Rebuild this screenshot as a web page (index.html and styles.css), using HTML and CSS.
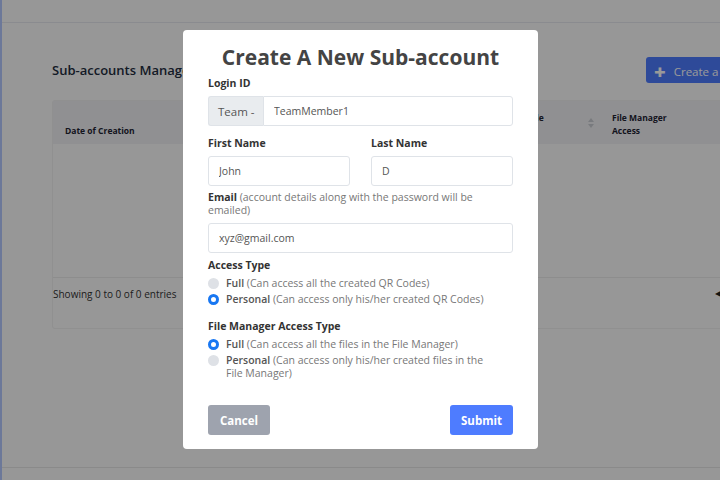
FILE: index.html
```html
<!DOCTYPE html>
<html lang="en">
<head>
  <meta charset="UTF-8">
  <title>Sub-accounts Management</title>
  <link rel="stylesheet" href="styles.css">
</head>
<body>
  <div class="page">
    <div class="sidebar-edge"></div>
    <div class="main">
      <div class="topbar"></div>
      <div class="content">
        <div class="title-row">
          <h2>Sub-accounts Management</h2>
          <button class="create-btn"><span class="plus">+</span> Create a Sub-account</button>
        </div>
        <div class="card">
          <div class="thead">
            <div class="th">Date of Creation</div>
            <div class="th">Login ID</div>
            <div class="th">Name</div>
            <div class="th">QR Code<br>Access <span class="sort"></span></div>
            <div class="th">File Manager<br>Access</div>
          </div>
          <div class="tbody-empty"></div>
          <div class="tfoot">
            <span>Showing 0 to 0 of 0 entries</span>
            <span class="pager">&#9664;</span>
          </div>
        </div>
      </div>
      <div class="footer"></div>
    </div>
  </div>

  <div class="overlay">
    <div class="modal">
      <h1>Create A New Sub-account</h1>

      <label class="field-label">Login ID</label>
      <div class="input-group">
        <span class="prefix">Team -</span>
        <input type="text" value="TeamMember1">
      </div>

      <div class="row">
        <div class="col">
          <label class="field-label">First Name</label>
          <input type="text" value="John">
        </div>
        <div class="col">
          <label class="field-label">Last Name</label>
          <input type="text" value="D">
        </div>
      </div>

      <label class="field-label">Email <span class="hint">(account details along with the password will be emailed)</span></label>
      <input class="email" type="text" value="xyz@gmail.com">

      <div class="radio-block">
        <label class="field-label">Access Type</label>
        <div class="radio"><span class="dot"></span><span><b>Full</b> (Can access all the created QR Codes)</span></div>
        <div class="radio"><span class="dot on"></span><span><b>Personal</b> (Can access only his/her created QR Codes)</span></div>
      </div>

      <div class="radio-block">
        <label class="field-label">File Manager Access Type</label>
        <div class="radio"><span class="dot on"></span><span><b>Full</b> (Can access all the files in the File Manager)</span></div>
        <div class="radio"><span class="dot"></span><span><b>Personal</b> (Can access only his/her created files in the File Manager)</span></div>
      </div>

      <div class="actions">
        <button class="btn cancel">Cancel</button>
        <button class="btn submit">Submit</button>
      </div>
    </div>
  </div>
</body>
</html>
```

FILE: styles.css
```css
body {
  margin: 0;
  font-family: "Open Sans", "Liberation Sans", sans-serif;
  background-color: #fcfcfc;
  width: 720px;
  height: 480px;
  overflow: hidden;
}
.page {
  display: flex;
  height: 480px;
}
.sidebar-edge {
  width: 2px;
  background-color: #b4c8ff;
}
.main {
  flex: 1;
  display: flex;
  flex-direction: column;
  min-width: 0;
  overflow: hidden;
}
.topbar {
  height: 22px;
  flex: none;
  border-bottom: 1px solid #e6e8ee;
}
.content {
  flex: 1;
  padding: 34px 0 0 50px;
}
.title-row {
  display: flex;
  justify-content: space-between;
  align-items: center;
  height: 26px;
}
.title-row h2 {
  margin: 0;
  font-size: 13px;
  font-weight: 600;
  color: #1f2d40;
}
.create-btn {
  flex: none;
  width: 130px;
  height: 26px;
  margin-right: -56px;
  border: none;
  border-radius: 3px;
  background-color: #4e7cff;
  color: #fff;
  font-family: inherit;
  font-size: 11.5px;
  text-align: left;
  padding-left: 8px;
  white-space: nowrap;
}
.plus {
  font-size: 20px;
  font-weight: 800;
  margin-right: 5px;
  vertical-align: -3px;
}
.card {
  margin-top: 17px;
  margin-right: -10px;
  border: 1px solid #f0f0f0;
  border-radius: 3px;
  background-color: #fcfcfc;
}
.thead {
  display: grid;
  grid-template-columns: 150px 150px 143px 104px 140px;
  height: 43px;
  background-color: #f0f1f3;
}
.th {
  position: relative;
  display: flex;
  align-items: flex-end;
  padding: 0 0 7px 12px;
  font-size: 8.5px;
  font-weight: 700;
  color: #1f2333;
  line-height: 13px;
}
.sort {
  position: absolute;
  right: 6px;
  top: 17px;
  width: 0;
  height: 0;
  border-left: 3px solid transparent;
  border-right: 3px solid transparent;
  border-bottom: 4px solid #c9ccd2;
}
.sort::after {
  content: "";
  position: absolute;
  left: -3px;
  top: 6px;
  border-left: 3px solid transparent;
  border-right: 3px solid transparent;
  border-top: 4px solid #c9ccd2;
}
.tbody-empty {
  height: 133px;
  border-bottom: 1px solid #ebebeb;
}
.tfoot {
  display: flex;
  justify-content: space-between;
  height: 41px;
  padding-top: 9px;
  font-size: 10px;
  color: #333;
}
.pager {
  font-size: 8px;
  color: #222;
  margin-right: 8px;
}
.footer {
  height: 12px;
  border-top: 1px solid #e6e6e6;
}

.overlay {
  position: fixed;
  inset: 0;
  background-color: rgba(0, 0, 0, 0.4);
  display: flex;
  justify-content: center;
  align-items: flex-start;
  padding-top: 30px;
}
.modal {
  width: 305px;
  margin-left: 1px;
  padding: 12px 25px 14px;
  background-color: #fff;
  border-radius: 4px;
  color: #333;
}
.modal h1 {
  margin: 0 0 5px;
  text-align: center;
  font-size: 21px;
  line-height: 30px;
  font-weight: 700;
  color: #444;
}
.field-label {
  display: block;
  font-size: 10.5px;
  font-weight: 700;
  color: #333;
  line-height: 13px;
  margin-bottom: 6px;
}
.hint {
  font-weight: 400;
  color: #777;
}
input {
  box-sizing: border-box;
  width: 100%;
  height: 30px;
  margin: 0;
  padding: 0 10px;
  border: 1px solid #dfe3e8;
  border-radius: 3px;
  font-family: inherit;
  font-size: 10.5px;
  color: #555;
}
input.email {
  display: block;
  margin-bottom: 6px;
}
.input-group {
  display: flex;
  margin-bottom: 11px;
}
.input-group input {
  border-radius: 0 3px 3px 0;
}
.prefix {
  display: flex;
  align-items: center;
  flex: none;
  box-sizing: border-box;
  width: 55px;
  height: 30px;
  padding-left: 9px;
  background-color: #e9ecef;
  border: 1px solid #dfe3e8;
  border-right: none;
  border-radius: 3px 0 0 3px;
  font-size: 11.5px;
  color: #555;
}
.row {
  display: flex;
  gap: 21px;
  margin-bottom: 5px;
}
.col {
  flex: 1;
}
.radio-block {
  margin-bottom: 14px;
}
.radio-block .field-label {
  margin-bottom: 5px;
}
.radio {
  display: flex;
  align-items: flex-start;
  gap: 7px;
  font-size: 10.5px;
  line-height: 13px;
  color: #777;
  margin-bottom: 3px;
  padding-right: 25px;
}
.radio b {
  font-weight: 600;
  color: #555;
}
.dot {
  flex: none;
  box-sizing: border-box;
  width: 11px;
  height: 11px;
  margin-top: 1px;
  border-radius: 50%;
  background-color: #dee1e6;
}
.dot.on {
  background-color: #fff;
  border: 3px solid #1877f2;
}
.actions {
  display: flex;
  justify-content: space-between;
  margin-top: 25px;
}
.btn {
  height: 30px;
  border: none;
  border-radius: 3px;
  color: #fff;
  font-family: inherit;
  font-size: 11.5px;
  font-weight: 700;
  padding: 0 12px;
}
.cancel {
  background-color: #9ea3ae;
}
.submit {
  background-color: #4e7cff;
  padding: 0 11px;
}
```
